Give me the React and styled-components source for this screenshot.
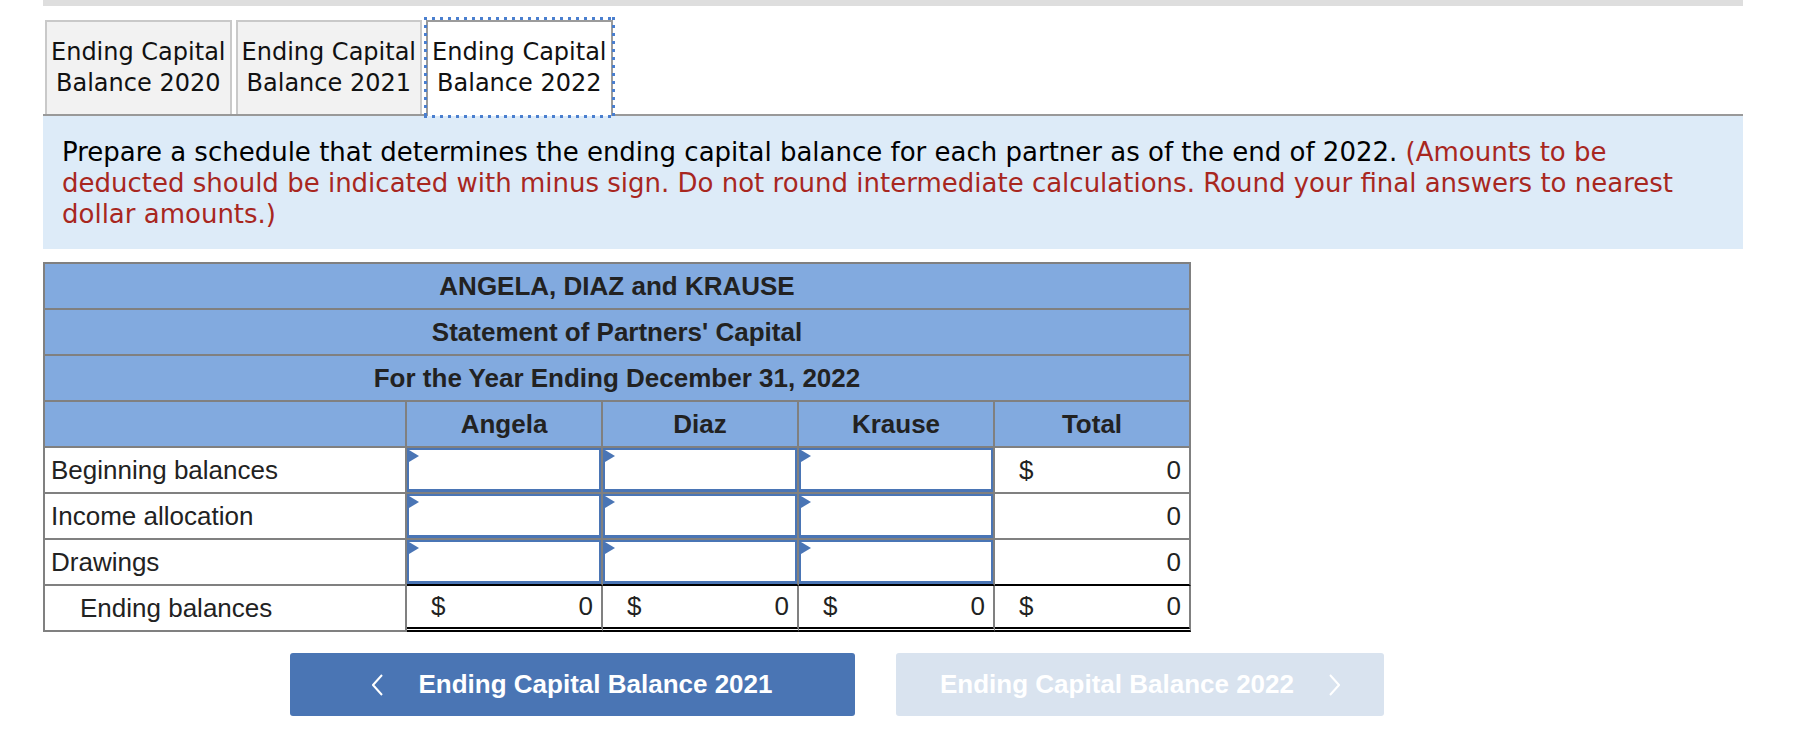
import React from 'react';
import styled, { createGlobalStyle } from 'styled-components';

const Global = createGlobalStyle`
  * { box-sizing: border-box; }
  body {
    margin: 0;
    background: #fff;
    font-family: "DejaVu Sans", Verdana, sans-serif;
    color: #000;
  }
`;

const Page = styled.div`
  padding-left: 43px;
  width: 1743px;
`;

const TopBar = styled.div`
  height: 6px;
  width: 1700px;
  background: #dedede;
`;

const TabStrip = styled.div`
  display: flex;
  align-items: flex-end;
  width: 1700px;
  margin-top: 14px;
  padding-left: 2px;
  border-bottom: 2px solid #999999;
`;

const Tab = styled.div`
  position: relative;
  margin-right: 4px;
  padding: 15px 4px;
  border: 2px solid ${(p) => (p.active ? '#9b9b9b' : '#c9c9c9')};
  border-bottom: none;
  background: ${(p) => (p.active ? '#ffffff' : '#f2f2f2')};
  font-size: 24px;
  line-height: 31px;
  text-align: center;
  color: #111;
  ${(p) => p.active && `
    margin-bottom: -2px;
    padding-bottom: 17px;
    &::after {
      content: '';
      position: absolute;
      left: -4px;
      right: -4px;
      top: -5px;
      bottom: -2px;
      background:
        linear-gradient(to right, #4a7fcf 3px, transparent 3px) top left / 8px 3px repeat-x,
        linear-gradient(to right, #4a7fcf 3px, transparent 3px) bottom left / 8px 3px repeat-x,
        linear-gradient(to bottom, #4a7fcf 3px, transparent 3px) top left / 3px 8px repeat-y,
        linear-gradient(to bottom, #4a7fcf 3px, transparent 3px) top right / 3px 8px repeat-y;
      pointer-events: none;
    }
  `}
`;

const Prompt = styled.div`
  width: 1700px;
  padding: 21px 19px 19px;
  background: #ddebf8;
  font-size: 26px;
  line-height: 31px;
  color: #000;
`;

const Note = styled.span`
  color: #a8271f;
`;

const Table = styled.table`
  margin-top: 13px;
  width: 1148px;
  table-layout: fixed;
  border-collapse: separate;
  border-spacing: 0;
  border-top: 2px solid #808080;
  border-left: 2px solid #808080;
  font-family: "Liberation Sans", Arial, sans-serif;
  font-size: 26px;
  color: #222;
`;

const Col = styled.col`
  width: ${(p) => p.w}px;
`;

const Cell = styled.td`
  height: 46px;
  padding: 0;
  border-right: 2px solid #808080;
  border-bottom: 2px solid #808080;
  vertical-align: middle;
`;

const TitleCell = styled(Cell)`
  background: #82aadf;
  font-weight: 700;
  text-align: center;
`;

const LabelCell = styled(Cell)`
  padding-left: ${(p) => (p.indent ? 35 : 6)}px;
`;

const ValueCell = styled(Cell)`
  ${(p) => p.rule === 'single' && 'border-bottom: 2px solid #000;'}
  ${(p) => p.rule === 'double' && 'border-bottom: 5px double #000;'}
`;

const Amount = styled.div`
  display: flex;
  justify-content: space-between;
  padding: 0 8px 0 24px;
`;

const Field = styled.div`
  position: relative;
  height: 44px;
  &::before {
    content: '';
    position: absolute;
    left: 2px;
    top: 2px;
    border-left: 10px solid #4a75b5;
    border-top: 6px solid transparent;
    border-bottom: 6px solid transparent;
  }
`;

const Input = styled.input`
  display: block;
  width: 100%;
  height: 100%;
  padding: 0 8px;
  border: 2px solid #4a75b5;
  border-bottom-width: 3px;
  background: #fff;
  font: inherit;
  text-align: right;
  outline: none;
`;

const Nav = styled.div`
  display: flex;
  gap: 41px;
  margin-top: 21px;
  padding-left: 247px;
`;

const NavButton = styled.button`
  display: flex;
  align-items: center;
  justify-content: center;
  gap: 35px;
  width: ${(p) => p.w}px;
  height: 63px;
  border: none;
  border-radius: 3px;
  background: ${(p) => (p.disabled ? '#d9e3ef' : '#4a75b4')};
  color: #fff;
  font-family: "Liberation Sans", Arial, sans-serif;
  font-size: 26px;
  font-weight: 700;
  cursor: ${(p) => (p.disabled ? 'default' : 'pointer')};
`;

const Chevron = ({ dir }) => (
  <svg width="11" height="22" viewBox="0 0 11 22" fill="none">
    <polyline
      points={dir === 'left' ? '10,1 1,11 10,21' : '1,1 10,11 1,21'}
      stroke="#fff"
      strokeWidth="2"
    />
  </svg>
);

const partners = ['Angela', 'Diaz', 'Krause'];
const rows = [
  { label: 'Beginning balances', dollar: true },
  { label: 'Income allocation' },
  { label: 'Drawings', rule: 'single' },
];

const App = () => (
  <Page>
    <Global />
    <TopBar />
    <TabStrip>
      <Tab>Ending Capital<br />Balance 2020</Tab>
      <Tab>Ending Capital<br />Balance 2021</Tab>
      <Tab active>Ending Capital<br />Balance 2022</Tab>
    </TabStrip>
    <Prompt>
      Prepare a schedule that determines the ending capital balance for each partner as of the end of 2022.{' '}
      <Note>
        (Amounts to be deducted should be indicated with minus sign. Do not round intermediate calculations. Round your final answers to nearest dollar amounts.)
      </Note>
    </Prompt>
    <Table>
      <colgroup>
        <Col w={362} />
        <Col w={196} />
        <Col w={196} />
        <Col w={196} />
        <Col w={196} />
      </colgroup>
      <tbody>
        <tr><TitleCell colSpan={5}>ANGELA, DIAZ and KRAUSE</TitleCell></tr>
        <tr><TitleCell colSpan={5}>Statement of Partners&apos; Capital</TitleCell></tr>
        <tr><TitleCell colSpan={5}>For the Year Ending December 31, 2022</TitleCell></tr>
        <tr>
          <TitleCell />
          {partners.map((p) => <TitleCell key={p}>{p}</TitleCell>)}
          <TitleCell>Total</TitleCell>
        </tr>
        {rows.map((r) => (
          <tr key={r.label}>
            <LabelCell>{r.label}</LabelCell>
            {partners.map((p) => (
              <ValueCell key={p} rule={r.rule}>
                <Field><Input type="text" aria-label={`${p} ${r.label}`} /></Field>
              </ValueCell>
            ))}
            <ValueCell rule={r.rule}>
              <Amount><span>{r.dollar ? '$' : ''}</span><span>0</span></Amount>
            </ValueCell>
          </tr>
        ))}
        <tr>
          <LabelCell indent>Ending balances</LabelCell>
          {[...partners, 'Total'].map((p) => (
            <ValueCell key={p} rule="double">
              <Amount><span>$</span><span>0</span></Amount>
            </ValueCell>
          ))}
        </tr>
      </tbody>
    </Table>
    <Nav>
      <NavButton w={565}>
        <Chevron dir="left" />
        Ending Capital Balance 2021
      </NavButton>
      <NavButton w={488} disabled>
        Ending Capital Balance 2022
        <Chevron dir="right" />
      </NavButton>
    </Nav>
  </Page>
);

export default App;
